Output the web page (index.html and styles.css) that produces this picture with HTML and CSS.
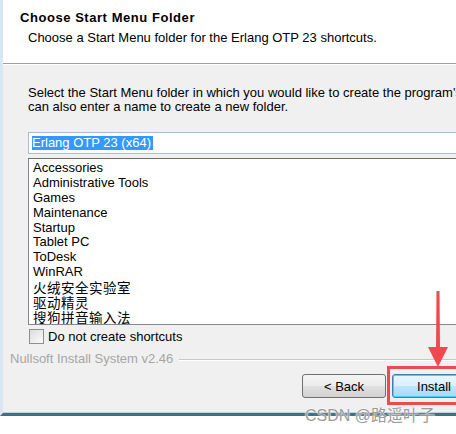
FILE: index.html
```html
<!DOCTYPE html>
<html>
<head>
<meta charset="utf-8">
<link rel="stylesheet" href="styles.css">
</head>
<body>
<div class="window">
  <div class="header">
    <div class="title">Choose Start Menu Folder</div>
    <div class="subtitle">Choose a Start Menu folder for the Erlang OTP 23 shortcuts.</div>
  </div>
  <div class="content">
    <p class="intro">Select the Start Menu folder in which you would like to create the program's shortcuts. You<br>can also enter a name to create a new folder.</p>
    <div class="input"><span class="sel">Erlang OTP 23 (x64)</span></div>
    <ul class="list">
      <li>Accessories</li>
      <li>Administrative Tools</li>
      <li>Games</li>
      <li>Maintenance</li>
      <li>Startup</li>
      <li>Tablet PC</li>
      <li>ToDesk</li>
      <li>WinRAR</li>
      <li class="cjk">火绒安全实验室</li>
      <li class="cjk">驱动精灵</li>
      <li class="cjk">搜狗拼音输入法</li>
    </ul>
    <label class="check"><span class="box"></span>Do not create shortcuts</label>
    <div class="brand"><span>Nullsoft Install System v2.46</span><span class="rule"></span></div>
    <div class="buttons">
      <button class="btn">&lt; Back</button>
      <button class="btn default">Install</button>
    </div>
  </div>
</div>
<div class="highlight"></div>
<svg class="arrow" width="24" height="80" viewBox="0 0 24 80">
  <polygon points="10.5,0 13.5,0 14,56 22,56 12,76 2,56 10,56" fill="#f04a50"/>
</svg>
<div class="watermark">CSDN @路遥叶子</div>
</body>
</html>
```
FILE: styles.css
```css
html, body {
  margin: 0;
  padding: 0;
}
body {
  width: 456px;
  height: 434px;
  overflow: hidden;
  background: #ffffff;
  font-family: "Liberation Sans", Arial, "Noto Sans CJK SC", sans-serif;
  font-size: 13px;
  color: #000;
  position: relative;
}
.window {
  width: 560px;
  height: 416px;
  box-sizing: border-box;
  border-left: 3px solid #dbe6f2;
  border-bottom: 3px solid #40707f;
  background: #f0f0f0;
  display: flex;
  flex-direction: column;
}
.header {
  height: 64px;
  box-sizing: border-box;
  background: #ffffff;
  border-bottom: 1px solid #a0a0a0;
  padding: 10px 0 0 17px;
}
.title {
  font-weight: bold;
  line-height: 15px;
  letter-spacing: 0.55px;
}
.subtitle {
  margin-top: 5px;
  margin-left: 8px;
  line-height: 15px;
}
.content {
  flex: 1;
  border-top: 1px solid #ffffff;
  border-bottom: 1px solid #b8d2e0;
  padding: 21px 0 0 25px;
  display: flex;
  flex-direction: column;
  align-items: flex-start;
}
.intro {
  margin: 0;
  line-height: 14px;
  white-space: nowrap;
}
.input {
  margin-top: 18px;
  width: 520px;
  height: 22px;
  box-sizing: border-box;
  border: 1px solid #a9bfd6;
  background: #fff;
  padding: 3px 0 0 3px;
  line-height: 14px;
}
.sel {
  background: #3399ff;
  color: #fff;
  display: inline-block;
  padding-right: 2px;
}
.list {
  margin: 4px 0 0 0;
  padding: 2px 0 0 4px;
  list-style: none;
  width: 520px;
  height: 167px;
  box-sizing: border-box;
  border: 1px solid #828790;
  border-top-color: #6d6d6d;
  background: #fff;
  overflow: hidden;
}
.list li {
  line-height: 14.9px;
  height: 14.9px;
  white-space: nowrap;
}
.list li.cjk {
  font-family: "Noto Sans CJK SC", sans-serif;
  font-size: 13.5px;
  letter-spacing: 0.5px;
}
.check {
  margin-top: 4px;
  display: flex;
  align-items: center;
  gap: 4px;
  line-height: 15px;
  margin-left: 1px;
}
.box {
  width: 13px;
  height: 13px;
  border: 1px solid #8f8f8f;
  background: linear-gradient(135deg, #dcdcdc, #fbfbfb);
}
.brand {
  margin-top: 7px;
  margin-left: -18px;
  display: flex;
  align-items: center;
  width: 540px;
  color: #a6a6a6;
  line-height: 15px;
  white-space: nowrap;
}
.rule {
  flex: 1;
  margin-left: 6px;
  margin-top: 2px;
  border-top: 1px solid #c8c8c8;
  border-bottom: 1px solid #ffffff;
}
.buttons {
  margin-top: 8px;
  margin-left: 274px;
  display: flex;
  gap: 6px;
}
.btn {
  width: 84px;
  height: 24px;
  box-sizing: border-box;
  border: 1px solid #707070;
  border-radius: 3px;
  background: linear-gradient(#f4f4f4 0%, #ececec 50%, #e0e0e0 51%, #d2d2d2 100%);
  font-family: "Liberation Sans", Arial, sans-serif;
  font-size: 13px;
  color: #000;
  padding: 0;
}
.btn.default {
  border-color: #3c7fb1;
  box-shadow: inset 0 0 0 1px #48d0f5;
  background: linear-gradient(#eaf6fd 0%, #d9f0fc 50%, #bee6fd 51%, #a7d9f5 100%);
}
.highlight {
  position: absolute;
  left: 387px;
  top: 366px;
  width: 80px;
  height: 39px;
  box-sizing: border-box;
  border: 3px solid #ef4a50;
}
.arrow {
  position: absolute;
  left: 426px;
  top: 291px;
}
.watermark {
  position: absolute;
  left: 305px;
  top: 406px;
  font-family: "Liberation Sans", "Noto Sans CJK SC", sans-serif;
  font-size: 16px;
  line-height: 19px;
  color: #9a9a9a;
  text-shadow: 0 0 2px #fff, 0 0 1px #fff;
}
```
